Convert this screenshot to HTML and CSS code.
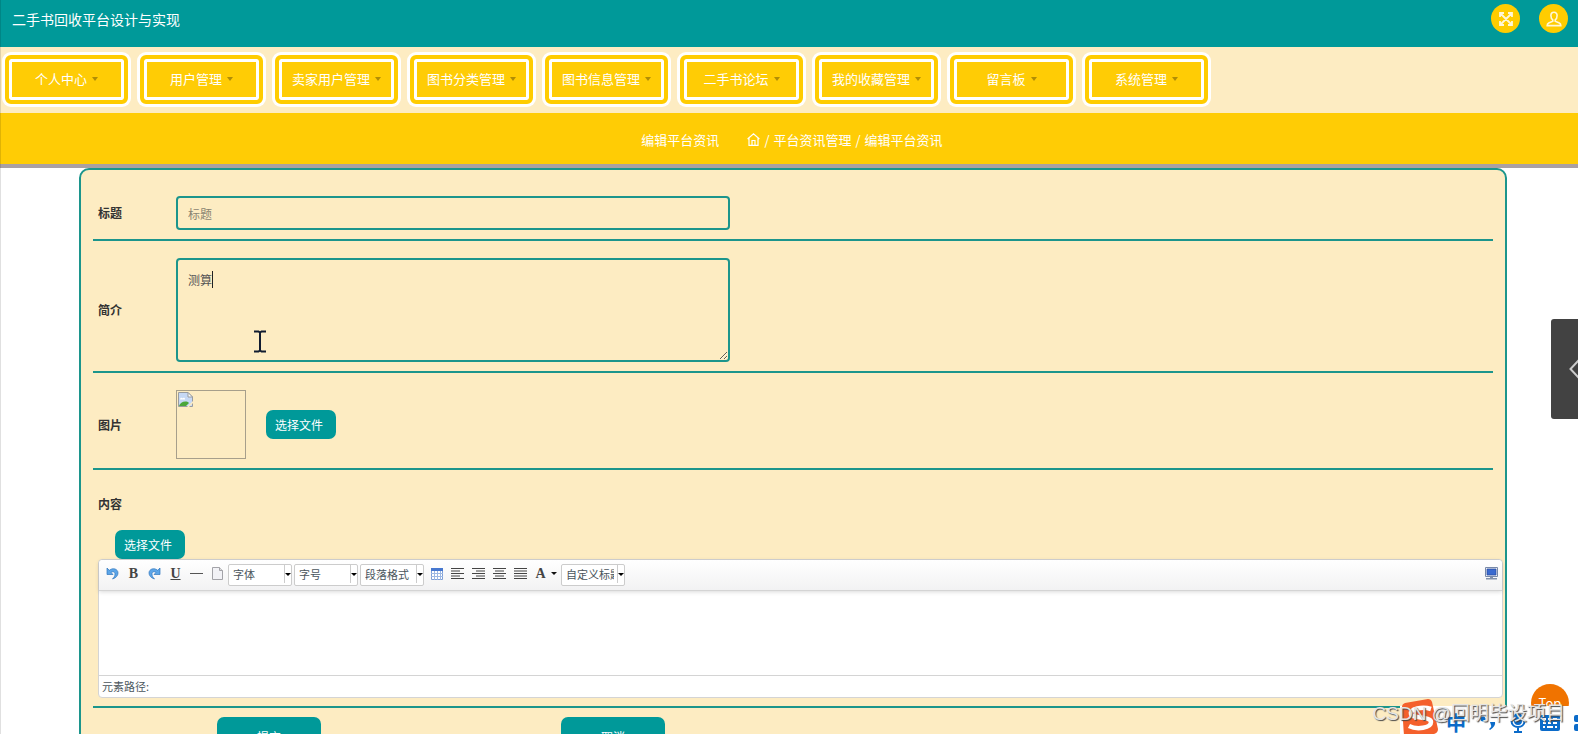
FILE: index.html
```html
<!DOCTYPE html>
<html lang="zh-CN">
<head>
    <meta charset="UTF-8">
    <meta name="viewport" content="width=device-width, initial-scale=1.0">
    <title>二手书回收平台设计与实现</title>
    <link rel="stylesheet" href="styles.css">
</head>
<body>
    <!-- 顶部 -->
    <header class="header">
        <h1>二手书回收平台设计与实现</h1>
        <div class="header-tools">
            <button type="button" class="round-btn" aria-label="全屏">
                <svg width="14" height="14" viewBox="0 0 14 14" fill="none" stroke="currentColor" stroke-width="1.8"><path d="M1.500 1.500l11 11M12.500 1.500l-11 11M1 5V1h4M9 1h4v4M13 9v4H9M5 13H1V9"/></svg>
            </button>
            <button type="button" class="round-btn" aria-label="个人信息">
                <svg width="16" height="16" viewBox="0 0 16 16" fill="none" stroke="currentColor" stroke-width="1.6"><path d="M8 1.200C5.900 1.200 4.900 2.700 4.900 4.600c0 1.900.8 3.600 1.900 4.300v1.400L2.700 11.900C1.600 12.400 1.200 13.200 1.200 14.600h13.600c0-1.400-.4-2.200-1.500-2.700L9.200 10.300V8.900c1.100-.7 1.900-2.400 1.900-4.300C11.100 2.700 10.100 1.200 8 1.200z"/></svg>
            </button>
        </div>
    </header>

    <!-- 菜单 -->
    <nav class="menu">
        <button type="button">个人中心<i class="caret"></i></button>
        <button type="button">用户管理<i class="caret"></i></button>
        <button type="button">卖家用户管理<i class="caret"></i></button>
        <button type="button">图书分类管理<i class="caret"></i></button>
        <button type="button">图书信息管理<i class="caret"></i></button>
        <button type="button">二手书论坛<i class="caret"></i></button>
        <button type="button">我的收藏管理<i class="caret"></i></button>
        <button type="button">留言板<i class="caret"></i></button>
        <button type="button">系统管理<i class="caret"></i></button>
    </nav>

    <!-- 面包屑 -->
    <div class="breadcrumb">
        <h2>编辑平台资讯</h2>
        <ol>
            <li><a href="#" aria-label="首页"><svg width="13" height="13" viewBox="0 0 13 13" fill="none" stroke="currentColor" stroke-width="1.2"><path d="M.6 6L6.500.9 12.400 6M2 5v7.300h9V5M5 12V7.500h3V12"/></svg></a></li>
            <li><a href="#">平台资讯管理</a></li>
            <li>编辑平台资讯</li>
        </ol>
    </div>

    <form class="edit-form">
        <div class="row">
            <label for="title">标题</label>
            <input type="text" id="title" class="field" placeholder="标题">
        </div>

        <div class="row">
            <label for="intro">简介</label>
            <div class="area">
                <textarea id="intro" class="field">测算</textarea>
                <span class="text-caret"></span>
                <svg class="mouse" width="14" height="23" viewBox="0 0 14 23" fill="none" stroke="#111c30" stroke-width="2"><path d="M1 1.500h4.500L7 2.500l1.500-1H13M7 2v19M1 21.500h4.500l1.500-1 1.500 1H13"/></svg>
            </div>
        </div>

        <div class="row">
            <label for="pick">图片</label>
            <div class="preview">
                <svg width="15" height="15" viewBox="0 0 15 15"><path d="M.5.5h9.500l4.500 4.500v9.500H.5z" fill="#c6d8f5" stroke="#9a9c9e"/><path d="M10 .5V5h4.500z" fill="#fff" stroke="#9a9c9e"/><path d="M2 7.500c0-2 2.200-2 2.500-1C5 5 7.500 5.500 7 7.500z" fill="#fff"/><path d="M1 14c1-4 7-6 10-3l-3 3z" fill="#4ba63a"/><path d="M9 15l6-6v2l-4 4z" fill="#fdecc2"/></svg>
            </div>
            <button type="button" id="pick" class="btn pick">选择文件</button>
        </div>

        <div class="row row-editor">
            <label for="content">内容</label>
            <button type="button" class="btn pick">选择文件</button>
            <div class="editor">
                <div class="toolbar">
                    <button type="button" class="tool" aria-label="撤销"><svg width="13" height="13" viewBox="0 0 13 13"><path d="M1 1v6.500h6L5 5.500c2-1.500 4-.5 4 1.500 0 2-1 3.500-2.500 5C10 11 12 8.500 12 6 12 2 7 .2 3.300 3.300z" fill="#5ba5e8" stroke="#2f76bd" stroke-width=".7"/></svg></button>
                    <button type="button" class="tool letter" aria-label="加粗">B</button>
                    <button type="button" class="tool" aria-label="重做"><svg width="13" height="13" viewBox="0 0 13 13"><path d="M12 1v6.500H6L8 5.500C6 4 4 5 4 7c0 2 1 3.500 2.500 5C3 11 1 8.500 1 6 1 2 6 .2 9.700 3.300z" fill="#5ba5e8" stroke="#2f76bd" stroke-width=".7"/></svg></button>
                    <button type="button" class="tool letter underline" aria-label="下划线">U</button>
                    <button type="button" class="tool" aria-label="分隔线"><svg width="13" height="13" viewBox="0 0 13 13"><path d="M0 6.500h13" stroke="#555"/></svg></button>
                    <button type="button" class="tool" aria-label="清空文档"><svg width="11" height="13" viewBox="0 0 11 13"><path d="M.5.500h7l3 3v9H.5z" fill="#f2f2f6" stroke="#a3a3a8"/><path d="M7.500.500v3h3" fill="#ddd" stroke="#a3a3a8"/></svg></button>
                    <span class="combo"><select aria-label="字体"><option>字体</option></select></span>
                    <span class="combo"><select aria-label="字号"><option>字号</option></select></span>
                    <span class="combo"><select aria-label="段落格式"><option>段落格式</option></select></span>
                    <button type="button" class="tool" aria-label="表格"><svg width="12" height="12" viewBox="0 0 12 12"><path d="M.5.500h11v11H.5z" fill="#fff" stroke="#7f9fd6"/><path d="M0 0h12v3H0z" fill="#4677cf"/><path d="M0 5.500h12M0 8.500h12M3.500 3v9M6.500 3v9M9.500 3v9" stroke="#9db8e3"/></svg></button>
                    <button type="button" class="tool" aria-label="左对齐"><svg width="13" height="11" viewBox="0 0 13 11"><path d="M0 .5h13M0 3h9M0 5.500h13M0 8h9M0 10.500h13" stroke="#444"/></svg></button>
                    <button type="button" class="tool" aria-label="右对齐"><svg width="13" height="11" viewBox="0 0 13 11"><path d="M0 .5h13M4 3h9M0 5.500h13M4 8h9M0 10.500h13" stroke="#444"/></svg></button>
                    <button type="button" class="tool" aria-label="居中"><svg width="13" height="11" viewBox="0 0 13 11"><path d="M0 .5h13M2 3h9M0 5.500h13M2 8h9M0 10.500h13" stroke="#444"/></svg></button>
                    <button type="button" class="tool" aria-label="两端对齐"><svg width="13" height="11" viewBox="0 0 13 11"><path d="M0 .5h13M0 3h13M0 5.500h13M0 8h13M0 10.500h13" stroke="#444"/></svg></button>
                    <button type="button" class="tool letter color" aria-label="字体颜色">A<i class="caret"></i></button>
                    <span class="combo"><select aria-label="自定义标题"><option>自定义标题</option></select></span>
                    <button type="button" class="tool full" aria-label="全屏编辑"><svg width="13" height="13" viewBox="0 0 13 13"><path d="M.5.500h12v9H.5z" fill="#e9edf5" stroke="#7788a8"/><path d="M2 2h9v6H2z" fill="#3a6ad0" stroke="#29479b" stroke-width=".7"/><path d="M5 10h3v1H5zM1 11h11v1.500H1z" fill="#8392ac"/></svg></button>
                </div>
                <textarea id="content" class="editor-body"></textarea>
                <div class="editor-path">元素路径:</div>
            </div>
        </div>

        <div class="actions">
            <button type="submit" class="btn">提交</button>
            <button type="button" class="btn">取消</button>
        </div>
    </form>

    <button type="button" class="side-tab" aria-label="展开">
        <svg width="9" height="20" viewBox="0 0 9 20" fill="none" stroke="#ccc" stroke-width="2"><path d="M10 1L1.500 10 10 19"/></svg>
    </button>
    <a href="#" class="to-top">Top</a>

    <!-- 输入法状态栏 -->
    <div class="ime">
        <svg class="ime-logo" width="40" height="36" viewBox="0 0 40 36"><path d="M2 8Q2 5 5 4L28 0q3 0 4 3l6 27q0 4-4 5L8 40q-3 0-4-3z" fill="#f4602c"/><path d="M31 10C22 7 10 10 11 15c1 5 20 2 20 8 0 6-14 8-22 4" fill="none" stroke="#fff" stroke-width="4.500"/></svg>
        <span class="ime-lang">中</span>
        <svg width="16" height="16" viewBox="0 0 16 16" fill="#0b6bc9"><circle cx="3" cy="4" r="2.500"/><path d="M10 7h5q1 4-5 8l-1-1q3-2 2-4z"/></svg>
        <svg width="16" height="20" viewBox="0 0 16 20" fill="none" stroke="#0b6bc9" stroke-width="2"><rect x="5" y="1" width="6" height="10" rx="3" fill="#0b6bc9"/><path d="M1.500 8c0 8 13 8 13 0M8 14v5M4 19h8"/></svg>
        <svg width="20" height="16" viewBox="0 0 20 16"><rect width="20" height="16" rx="2" fill="#0b6bc9"/><path d="M3 4h3M8 4h3M13 4h4M3 8h3M8 8h3M13 8h4M3 12h2M7 12h6M15 12h2" stroke="#fff" stroke-width="2"/></svg>
        <svg width="16" height="16" viewBox="0 0 16 16" fill="#0b6bc9"><rect width="7" height="7" rx="2"/><rect y="9" width="7" height="7" rx="2"/><rect x="9" width="7" height="7" rx="2"/><rect x="9" y="9" width="7" height="7" rx="2"/></svg>
    </div>
    <div class="watermark">CSDN @回明毕设项目</div>
</body>
</html>
```
FILE: styles.css
```css
* {
    margin: 0;
    padding: 0;
    box-sizing: border-box;
}

body {
    position: relative;
    height: 100vh;
    overflow: hidden;
    background-color: #fff;
    color: #333;
    font-family: "Noto Sans CJK SC", sans-serif;
    font-size: 12px;
    line-height: 20px;
}

/* 左侧阴影 */
body::before {
    content: "";
    position: absolute;
    top: 0;
    bottom: 0;
    left: 0;
    width: 1px;
    background-color: rgba(0, 0, 0, 0.12);
}

button,
input,
select,
textarea {
    font-family: inherit;
    font-size: 12px;
    line-height: 20px;
}

button {
    border: none;
    cursor: pointer;
}

a {
    color: inherit;
    text-decoration: none;
}

svg {
    display: block;
}

.header {
    display: flex;
    justify-content: space-between;
    height: 47px;
    padding: 4px 10px 0 12px;
    background-color: #009999;
    color: #fff;
}

.header h1 {
    padding-top: 5px;
    font-size: 14px;
    font-weight: normal;
}

.header-tools {
    display: flex;
    gap: 19px;
}

.round-btn {
    display: flex;
    justify-content: center;
    align-items: center;
    width: 29px;
    height: 29px;
    border-radius: 50%;
    background-color: #ffcc00;
    color: #fff7d8;
}

.menu {
    display: flex;
    gap: 12px;
    padding: 8px 5px 9px;
    background-color: #fdecc2;
}

.menu button {
    display: flex;
    justify-content: center;
    align-items: center;
    gap: 5px;
    width: 123px;
    height: 49px;
    padding-bottom: 2px;
    border: 4px solid #ffcc00;
    border-radius: 6px;
    background-color: #ffcc05;
    box-shadow: 0 0 0 3px #fff, inset 0 0 0 3px #fff;
    color: #fff;
    font-size: 13px;
}

.caret {
    border: 3px solid transparent;
    border-top: 4px solid #b08d06;
    border-bottom: none;
}

.breadcrumb {
    display: flex;
    justify-content: center;
    align-items: center;
    gap: 28px;
    height: 55px;
    padding: 2px 0 0 6px;
    border-bottom: 4px solid #aaa0a3;
    background-color: #ffcc05;
    color: #fff;
    font-size: 13px;
}

.breadcrumb h2 {
    font-size: 13px;
    font-weight: normal;
}

.breadcrumb ol {
    display: flex;
    align-items: center;
    list-style: none;
}

.breadcrumb li + li::before {
    content: "/";
    margin: 0 4px;
}

.edit-form {
    margin: 0 71px 0 79px;
    padding: 0 12px;
    border: 2px solid #1c958c;
    border-radius: 10px;
    background-color: #fdecc2;
}

.row {
    display: flex;
    align-items: center;
    padding: 17px 0 9px 5px;
    border-bottom: 2px solid #1c958c;
}

.row:first-child {
    padding-top: 26px;
}

.row label {
    width: 78px;
    font-weight: bold;
}

.field {
    display: block;
    width: 554px;
    height: 34px;
    padding: 0 10px;
    border: 2px solid #1c958c;
    border-radius: 4px;
    background-color: transparent;
    color: #555;
    outline: none;
}

.field::placeholder {
    color: #8a8471;
}

.area {
    position: relative;
}

textarea.field {
    height: 104px;
    padding-top: 10px;
}

.text-caret {
    position: absolute;
    top: 13px;
    left: 36px;
    width: 1px;
    height: 17px;
    background-color: #222;
}

.mouse {
    position: absolute;
    top: 72px;
    left: 77px;
}

.preview {
    width: 70px;
    height: 69px;
    margin-right: 20px;
    padding: 1px;
    border: 1px solid #a79f8b;
}

.btn {
    width: 70px;
    height: 29px;
    border-radius: 7px;
    background-color: #009999;
    color: #fff;
}

.pick {
    padding-right: 4px;
}

.row-editor {
    display: block;
    padding-top: 24px;
    padding-bottom: 8px;
}

.row-editor label {
    display: block;
}

.row-editor .btn {
    display: block;
    margin: 16px 0 0 17px;
}

.editor {
    margin-right: -10px;
    border: 1px solid #d4d4d4;
    border-radius: 4px;
    background-color: #fff;
    font-size: 11px;
}

.toolbar {
    display: flex;
    align-items: center;
    height: 31px;
    padding: 0 0 0 3px;
    border-bottom: 1px solid #d4d4d4;
    border-radius: 4px 4px 0 0;
    background: linear-gradient(#fff, #f2f2f3);
    box-shadow: 0 1px 4px rgba(0, 0, 0, 0.15);
}

.tool {
    display: flex;
    justify-content: center;
    align-items: center;
    width: 21px;
    height: 20px;
    padding-bottom: 3px;
    background: none;
}

.letter {
    color: #444;
    font-family: "Liberation Serif", serif;
    font-size: 14px;
    font-weight: bold;
}

.underline {
    text-decoration: underline;
}

.color {
    gap: 5px;
    width: 30px;
}

.color .caret {
    border-top: 3px solid #111;
}

.full {
    margin-left: auto;
}

.combo {
    position: relative;
    width: 64px;
    height: 22px;
    margin-right: 2px;
    border: 1px solid #ccc;
    border-radius: 2px;
    background-color: #fff;
}

.combo select {
    appearance: none;
    display: block;
    width: 56px;
    height: 18px;
    padding: 0 3px 0 4px;
    border: none;
    border-right: 1px solid #ccc;
    background: none;
    color: #4a555c;
    font-size: 11px;
    line-height: 18px;
}

.combo::after {
    content: "";
    position: absolute;
    top: 8px;
    right: 0;
    border: 3px solid transparent;
    border-top: 3px solid #000;
    border-bottom: none;
}

.editor-body {
    display: block;
    width: 100%;
    height: 84px;
    border: none;
    outline: none;
    resize: none;
    background: none;
}

.editor-path {
    padding: 0 3px 1px;
    border-top: 1px solid #d4d4d4;
    color: #4a555c;
}

.actions {
    display: flex;
    gap: 240px;
    padding: 9px 0 20px 124px;
}

.actions .btn {
    width: 104px;
    height: 40px;
}

.side-tab {
    position: absolute;
    top: 319px;
    right: 0;
    display: flex;
    justify-content: flex-end;
    align-items: center;
    width: 27px;
    height: 100px;
    border-radius: 3px 0 0 3px;
    background-color: #424242;
}

.to-top {
    position: absolute;
    right: 9px;
    bottom: 12px;
    width: 38px;
    height: 38px;
    border-radius: 50%;
    background-color: #f07300;
    color: #fff;
    font-size: 13px;
    line-height: 38px;
    text-align: center;
}

.ime {
    position: absolute;
    right: -12px;
    bottom: 0;
    display: flex;
    align-items: center;
    gap: 14px;
    height: 28px;
    padding-top: 6px;
    background-color: #fff;
}

.ime-logo {
    margin: -12px -8px 0 0;
}

.ime-lang {
    color: #0b6bc9;
    font-size: 20px;
    font-weight: bold;
}

.watermark {
    position: absolute;
    right: 13px;
    bottom: 10px;
    color: #e4e4e4;
    font-family: "Liberation Sans", "Noto Sans CJK SC", sans-serif;
    font-size: 19px;
    text-shadow: 1px 1px 1px #444;
}
```
